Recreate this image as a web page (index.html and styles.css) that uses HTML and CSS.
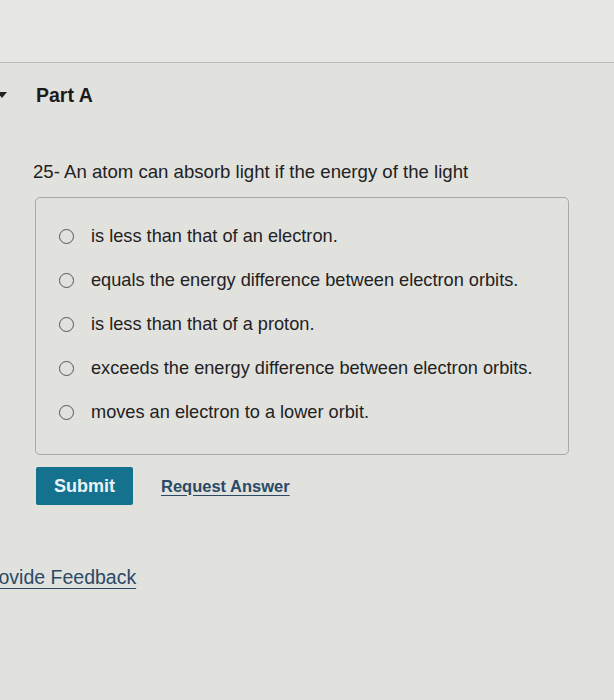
FILE: index.html
```html
<!DOCTYPE html>
<html>
<head>
<meta charset="utf-8">
<link rel="stylesheet" href="styles.css">
</head>
<body>
<div class="topbar"></div>
<div class="part">
  <span class="caret"></span>
  <span class="part-title">Part A</span>
</div>
<div class="question">25- An atom can absorb light if the energy of the light</div>
<div class="options">
  <label class="opt"><span class="radio"></span><span>is less than that of an electron.</span></label>
  <label class="opt"><span class="radio"></span><span>equals the energy difference between electron orbits.</span></label>
  <label class="opt"><span class="radio"></span><span>is less than that of a proton.</span></label>
  <label class="opt"><span class="radio"></span><span>exceeds the energy difference between electron orbits.</span></label>
  <label class="opt"><span class="radio"></span><span>moves an electron to a lower orbit.</span></label>
</div>
<div class="actions">
  <button class="submit">Submit</button>
  <a class="request">Request Answer</a>
</div>
<div class="feedback"><a>Provide Feedback</a></div>
</body>
</html>
```
FILE: styles.css
```css
html, body {
  margin: 0;
  padding: 0;
}
body {
  background: #e1e1de;
  font-family: "Liberation Sans", Arial, sans-serif;
  color: #1f1f1f;
  width: 614px;
  height: 700px;
  overflow: hidden;
}
.topbar {
  height: 62px;
  background: #e6e6e4;
  border-bottom: 1px solid #b9b9b7;
}
.part {
  display: flex;
  align-items: center;
  height: 22px;
  margin-top: 21px;
}
.caret {
  width: 0;
  height: 0;
  border-left: 5px solid transparent;
  border-right: 5px solid transparent;
  border-top: 6px solid #222;
  margin-left: -3px;
}
.part-title {
  margin-left: 29px;
  font-size: 19.5px;
  font-weight: bold;
  color: #1b1b1b;
}
.question {
  margin: 55px 0 0 33px;
  font-size: 18.6px;
  line-height: 22px;
  color: #222;
}
.options {
  margin: 14px 0 0 35px;
  padding-top: 16px;
  box-sizing: border-box;
  height: 258px;
  width: 534px;
  border: 1px solid #a9a9a7;
  border-radius: 5px;
}
.opt {
  display: flex;
  align-items: center;
  height: 44px;
  font-size: 18.2px;
  color: #222;
}
.radio {
  width: 13px;
  height: 13px;
  border: 1.5px solid #555;
  border-radius: 50%;
  margin-left: 23px;
  margin-right: 17px;
  flex: none;
}
.actions {
  display: flex;
  align-items: center;
  margin: 12px 0 0 36px;
}
.submit {
  width: 97px;
  height: 38px;
  background: #15728f;
  color: #e9f3f6;
  border: none;
  border-radius: 2px;
  font-family: "Liberation Sans", Arial, sans-serif;
  font-size: 18px;
  font-weight: bold;
  padding: 0;
}
.request {
  margin-left: 28px;
  font-size: 16.5px;
  font-weight: bold;
  color: #2a4a66;
  text-decoration: underline;
  text-underline-offset: 3px;
}
.feedback {
  margin-top: 61px;
  font-size: 19.5px;
  color: #2a4a66;
}
.feedback a {
  display: inline-block;
  margin-left: -21px;
  text-decoration: underline;
  text-underline-offset: 4px;
}
```
